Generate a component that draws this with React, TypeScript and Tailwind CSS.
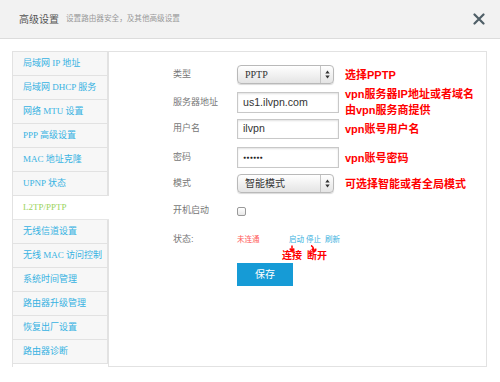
import React from "react";

const menu = [
  "局域网 IP 地址",
  "局域网 DHCP 服务",
  "网络 MTU 设置",
  "PPP 高级设置",
  "MAC 地址克隆",
  "UPNP 状态",
  "L2TP/PPTP",
  "无线信道设置",
  "无线 MAC 访问控制",
  "系统时间管理",
  "路由器升级管理",
  "恢复出厂设置",
  "路由器诊断",
];

const serif = { fontFamily: '"Liberation Serif", "Noto Sans CJK SC", serif' };

function SelectBox({ value, isSerif }: { value: string; isSerif?: boolean }) {
  return (
    <div className="flex h-full w-[97px] items-center rounded-[4px] border border-[#b9b9b9] bg-gradient-to-b from-[#ffffff] to-[#e4e4e4] shadow-[0_1px_1px_rgba(0,0,0,0.15)]">
      <div
        className="flex-1 pl-[7px] text-[10px] text-[#333]"
        style={isSerif ? serif : { fontFamily: '"Liberation Sans", "Noto Sans CJK SC", sans-serif' }}
      >
        {value}
      </div>
      <div className="flex h-full w-[13px] items-center justify-center border-l border-[#c4c4c4]">
        <svg width="5" height="9" viewBox="0 0 5 9">
          <path d="M2.5 0.5 L4.7 3.6 L0.3 3.6 Z" fill="#333" />
          <path d="M2.5 8.5 L4.7 5.4 L0.3 5.4 Z" fill="#333" />
        </svg>
      </div>
    </div>
  );
}

function TextBox({ children }: { children: React.ReactNode }) {
  return (
    <div className="flex h-full w-[102px] items-center border border-[#c8c8c8] bg-white pl-[5px] shadow-[inset_0_1px_2px_rgba(0,0,0,0.12)]">
      {children}
    </div>
  );
}

function Row({
  label,
  mt,
  h,
  control,
  note,
}: {
  label: string;
  mt: string;
  h: string;
  control: React.ReactNode;
  note?: React.ReactNode;
}) {
  return (
    <div className={`flex items-center ${mt} ${h}`}>
      <div className="w-[64px] text-[9px] text-[#777]">{label}</div>
      <div className="h-full w-[108px]">{control}</div>
      {note && <div className="whitespace-nowrap text-[11px] font-bold leading-[16px] text-[#ff0000]">{note}</div>}
    </div>
  );
}

export default function App() {
  return (
    <div
      className="h-[382px] w-[500px] overflow-hidden bg-white"
      style={{ fontFamily: '"Liberation Sans", "Noto Sans CJK SC", sans-serif' }}
    >
      {/* header */}
      <div className="flex h-[39px] items-center border-b border-[#dcdcdc] bg-[#f2f2f2] pl-[19px] pr-[15px]">
        <div className="text-[10px] text-[#555]">高级设置</div>
        <div className="ml-[7px] text-[7.6px] text-[#999]">设置路由器安全，及其他高级设置</div>
        <div className="ml-auto flex items-center">
          <svg width="12" height="12" viewBox="0 0 12 12">
            <path d="M1.5 1.5 L10.5 10.5 M10.5 1.5 L1.5 10.5" stroke="#4f5f67" strokeWidth="2.2" strokeLinecap="round" />
          </svg>
        </div>
      </div>

      {/* body */}
      <div className="flex pl-[12px] pr-[13px] pt-[12px]">
        {/* sidebar */}
        <div className="w-[96px] border-l border-t border-[#e2e2e2]" style={serif}>
          {menu.map((m) => {
            const active = m === "L2TP/PPTP";
            return (
              <div
                key={m}
                className={
                  active
                    ? "relative z-10 -mr-px flex h-[24px] items-center whitespace-nowrap border-b border-[#e6e6e6] bg-white pl-[10px] text-[9px] text-[#9ad35c]"
                    : "flex h-[24px] items-center whitespace-nowrap border-b border-r border-[#e2e2e2] bg-[#f7f7f7] pl-[10px] text-[9px] text-[#36b2e2]"
                }
              >
                {m}
              </div>
            );
          })}
        </div>

        {/* panel */}
        <div className="h-[316px] flex-1 border border-[#e2e2e2] bg-white pl-[64px]">
          <Row
            label="类型"
            mt="mt-[13px]"
            h="h-[19px]"
            control={<SelectBox value="PPTP" isSerif />}
            note="选择PPTP"
          />
          <Row
            label="服务器地址"
            mt="mt-[8px]"
            h="h-[21px]"
            control={
              <TextBox>
                <span className="text-[10.6px] text-[#333]">us1.ilvpn.com</span>
              </TextBox>
            }
            note={
              <div className="-mt-[2px]">
                vpn服务器IP地址或者域名
                <br />
                由vpn服务商提供
              </div>
            }
          />
          <Row
            label="用户名"
            mt="mt-[6px]"
            h="h-[20px]"
            control={
              <TextBox>
                <span className="text-[10.6px] text-[#333]">ilvpn</span>
              </TextBox>
            }
            note="vpn账号用户名"
          />
          <Row
            label="密码"
            mt="mt-[8px]"
            h="h-[21px]"
            control={
              <TextBox>
                <span className="text-[5px] tracking-[0.3px] text-[#222]">●●●●●●</span>
              </TextBox>
            }
            note="vpn账号密码"
          />
          <Row
            label="模式"
            mt="mt-[6px]"
            h="h-[19px]"
            control={<SelectBox value="智能模式" />}
            note="可选择智能或者全局模式"
          />
          <Row
            label="开机启动"
            mt="mt-[8px]"
            h="h-[20px]"
            control={
              <div className="flex h-full items-center">
                <div className="h-[9px] w-[9px] rounded-[2px] border border-[#999] bg-gradient-to-b from-white to-[#e8e8e8]" />
              </div>
            }
          />
          <div className="mt-[11px] flex h-[16px] items-center">
            <div className="w-[64px] text-[9px] text-[#777]">状态:</div>
            <div className="flex items-center text-[7.5px]">
              <span className="w-[52px] text-[#ff5b5b]">未连通</span>
              <span className="w-[17px] text-[#3ab2e0]">启动</span>
              <span className="w-[19px] text-[#3ab2e0]">停止</span>
              <span className="text-[#3ab2e0]">刷新</span>
            </div>
          </div>
          <div className="relative flex h-[14px] items-center pl-[109px] text-[10px] font-bold text-[#ff0000]">
            <svg className="absolute left-[116px] top-[-3px]" width="8" height="8" viewBox="0 0 8 8">
              <path d="M3 0.5 L3 5 M0.8 3.5 L3 6.5 L5.2 3.5" stroke="#ff0000" strokeWidth="1.5" fill="none" />
            </svg>
            <svg className="absolute left-[137px] top-[-3px]" width="8" height="8" viewBox="0 0 8 8">
              <path d="M1 0.5 Q3 1 4 5 M1.8 3.8 L4 6.8 L6.2 3.6" stroke="#ff0000" strokeWidth="1.5" fill="none" />
            </svg>
            <span>连接</span>
            <span className="ml-[5px]">断开</span>
          </div>
          <div className="mt-[1px] pl-[64px]">
            <div
              className="flex h-[23px] w-[56px] items-center justify-center bg-[#169bd6] text-[10px] text-white"
              style={serif}
            >
              保存
            </div>
          </div>
        </div>
      </div>
    </div>
  );
}
